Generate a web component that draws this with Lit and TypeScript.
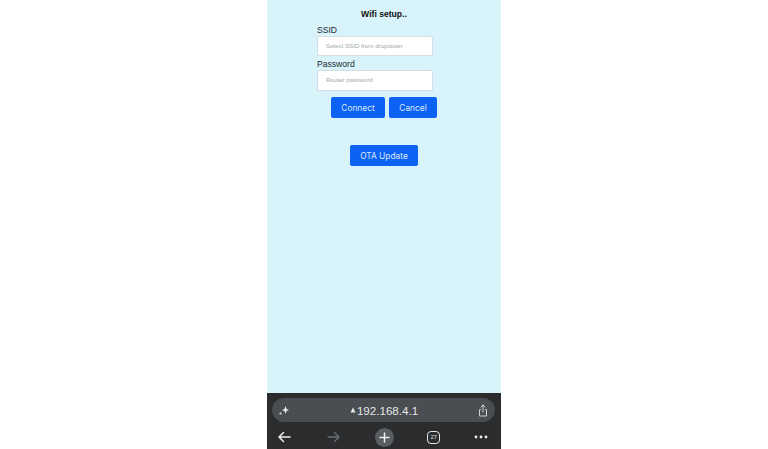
import { LitElement, html, css, svg } from "lit";
import { customElement } from "lit/decorators.js";

@customElement("app-root")
export class AppRoot extends LitElement {
  static styles = css`
    :host { display: block; width: 768px; height: 449px; background: #fff; font-family: "Liberation Sans", Arial, sans-serif; overflow: hidden; }
    .phone { width: 234px; height: 449px; margin-left: 267px; display: flex; flex-direction: column; }
    .page { flex: 1; background: #d8f3f9; display: flex; flex-direction: column; align-items: center; }
    h1 { margin: 9px 0 0; font-size: 8.6px; line-height: 11px; font-weight: 700; color: #111; text-align: center; }
    form { width: 116px; display: flex; flex-direction: column; margin: 4.5px 0 0 50px; align-self: flex-start; }
    label { font-size: 8.6px; line-height: 10px; color: #1d2a30; }
    .input { height: 20.5px; margin: 1px 0 3px; box-sizing: border-box; background: #fff; border: 1px solid #d3dde2; border-radius: 2px; padding: 0 0 1px 8px; display: flex; align-items: center; font-size: 6.2px; color: #a2a6a9; }
    .actions { display: flex; gap: 4px; margin-top: 3.5px; padding-left: 14px; width: 106px; }
    .btn { box-sizing: border-box; height: 21px; background: #0d62f6; color: #dbe9fb; border-radius: 2px; border: 0; display: flex; align-items: center; justify-content: center; font-family: Inter, "Liberation Sans", sans-serif; font-size: 8.4px; flex: none; }
    .connect { width: 54px; }
    .cancel { width: 48px; }
    .ota { width: 68px; margin-top: 27px; }
    .chrome { height: 56px; background: #2a2c2e; display: flex; flex-direction: column; align-items: center; }
    .url { box-sizing: border-box; width: 223px; height: 24px; margin: 5px 1px 0 0; border-radius: 12px; background: #4a4d52; display: flex; align-items: center; justify-content: space-between; padding: 0 6px 0 6px; color: #e6e7e8; flex: none; }
    .addr { display: flex; align-items: center; gap: 1px; font-size: 11.6px; letter-spacing: 0; margin-left: 1px; }
    .nav { width: 234px; box-sizing: border-box; padding: 0 13px 0 10px; margin-top: 3px; display: flex; align-items: center; justify-content: space-between; height: 24px; flex: none; }
    svg { display: block; }
    .fwd { margin-left: 2px; }
    .plus { width: 19px; height: 19px; border-radius: 50%; background: #5a5d61; display: flex; align-items: center; justify-content: center; }
    .tabs { box-sizing: border-box; width: 13px; height: 13px; border: 1px solid #e4e5e6; border-radius: 4px; color: #e4e5e6; font-size: 6px; display: flex; align-items: center; justify-content: center; }
  `;

  private icon(w: number, h: number, body: unknown) {
    return html`<svg width=${w} height=${h} viewBox="0 0 ${w} ${h}" fill="none" stroke-linecap="round" stroke-linejoin="round">${body}</svg>`;
  }

  render() {
    return html`
      <div class="phone">
        <main class="page">
          <h1>Wifi setup..</h1>
          <form>
            <label>SSID</label>
            <div class="input">Select SSID from dropdown</div>
            <label>Password</label>
            <div class="input">Router password</div>
            <div class="actions">
              <div class="btn connect">Connect</div>
              <div class="btn cancel">Cancel</div>
            </div>
          </form>
          <div class="btn ota">OTA Update</div>
        </main>
        <div class="chrome">
          <div class="url">
            ${this.icon(12, 12, svg`<path d="M7.5 2 L8.6 5 L11 6 L8.6 7 L7.5 10 L6.4 7 L4 6 L6.4 5 Z" fill="#e6e7e8"/><circle cx="2.5" cy="9.5" r="1.1" fill="#e6e7e8"/>`)}
            <div class="addr">
              ${this.icon(6, 6, svg`<path d="M3 .5 L5.5 5.5 H.5 Z" fill="#e6e7e8"/>`)}
              <span>192.168.4.1</span>
            </div>
            ${this.icon(12, 13, svg`<path d="M3.5 5.5 H2.5 V12 H9.5 V5.5 H8.5 M6 8 V1 M4 3 L6 1 L8 3" stroke="#cfd0d2" stroke-width="1"/>`)}
          </div>
          <div class="nav">
            ${this.icon(14, 12, svg`<path d="M13 6 H2 M6.5 1.5 L2 6 L6.5 10.5" stroke="#eceded" stroke-width="1.5"/>`)}
            <div class="fwd">${this.icon(14, 12, svg`<path d="M1 6 H12 M7.5 1.5 L12 6 L7.5 10.5" stroke="#6b6e71" stroke-width="1.3"/>`)}</div>
            <div class="plus">${this.icon(11, 11, svg`<path d="M5.5 1 V10 M1 5.5 H10" stroke="#eceded" stroke-width="1.5"/>`)}</div>
            <div class="tabs">27</div>
            ${this.icon(14, 4, svg`<g fill="#eceded"><circle cx="2" cy="2" r="1.4"/><circle cx="7" cy="2" r="1.4"/><circle cx="12" cy="2" r="1.4"/></g>`)}
          </div>
        </div>
      </div>
    `;
  }
}
